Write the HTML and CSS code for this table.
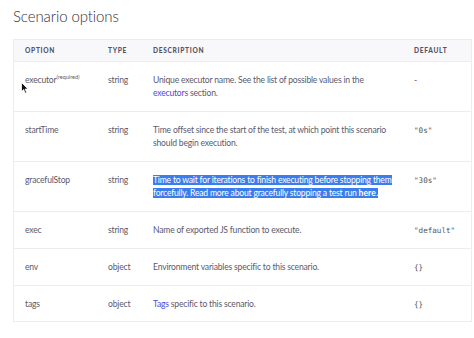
FILE: index.html
```html
<!DOCTYPE html>
<html lang="en">
<head>
    <meta charset="UTF-8">
    <meta name="viewport" content="width=device-width, initial-scale=1.0">
    <title>Scenario options</title>
    <link rel="stylesheet" href="styles.css">
</head>
<body>
    <div class="page">
        <h2 class="title">Scenario options</h2>

        <table class="options">
            <thead>
                <tr>
                    <th class="col-option">Option</th>
                    <th class="col-type">Type</th>
                    <th class="col-desc">Description</th>
                    <th class="col-default">Default</th>
                </tr>
            </thead>
            <tbody>
                <tr>
                    <td>executor<sup>(required)</sup></td>
                    <td>string</td>
                    <td>Unique executor name. See the list of possible values in the <a href="#">executors</a> section.</td>
                    <td>-</td>
                </tr>
                <tr>
                    <td>startTime</td>
                    <td>string</td>
                    <td>Time offset since the start of the test, at which point this scenario should begin execution.</td>
                    <td><code>"0s"</code></td>
                </tr>
                <tr>
                    <td>gracefulStop</td>
                    <td>string</td>
                    <td><span class="selected">Time to wait for iterations to finish executing before stopping them forcefully. Read more about gracefully stopping a test run <a class="strong" href="#">here</a>.</span></td>
                    <td><code>"30s"</code></td>
                </tr>
                <tr>
                    <td>exec</td>
                    <td>string</td>
                    <td>Name of exported JS function to execute.</td>
                    <td><code>"default"</code></td>
                </tr>
                <tr>
                    <td>env</td>
                    <td>object</td>
                    <td>Environment variables specific to this scenario.</td>
                    <td><code>{}</code></td>
                </tr>
                <tr>
                    <td>tags</td>
                    <td>object</td>
                    <td><a href="#">Tags</a> specific to this scenario.</td>
                    <td><code>{}</code></td>
                </tr>
            </tbody>
        </table>

        <svg class="cursor" width="8" height="12" viewBox="0 0 8 12">
            <path d="M0.5 0.5 L0.5 9.5 L2.6 7.6 L4.2 11.2 L5.6 10.6 L4.1 7.1 L7 7 Z" fill="#111" stroke="#fff" stroke-width="0.8"/>
        </svg>
    </div>
</body>
</html>
```

FILE: styles.css
```css
body {
    margin: 0;
    background-color: #fff;
    font-family: Lato, "Open Sans", sans-serif;
    color: #5a5a6e;
}
.page {
    position: relative;
    padding: 7px 4px 0 13px;
}
.title {
    margin: 0 0 13px 0;
    font-size: 15px;
    font-weight: 300;
    line-height: 19px;
    color: #2f2f3d;
    letter-spacing: -0.1px;
}
.options {
    width: 457px;
    border-collapse: collapse;
    border: 1px solid #ececf1;
    font-size: 8.6px;
    letter-spacing: -0.2px;
    table-layout: fixed;
}
.options th {
    background-color: #f8f8fb;
    text-align: left;
    font-size: 6.6px;
    font-weight: 900;
    letter-spacing: 0.7px;
    text-transform: uppercase;
    color: #555566;
    padding: 5px 11px;
    line-height: 11px;
    border-bottom: 1px solid #ececf1;
}
.options td {
    padding: 11.5px 11px;
    line-height: 13px;
    vertical-align: top;
    border-bottom: 1px solid #ececf1;
}
.options tr:last-child td {
    padding-bottom: 10px;
}
.col-option { width: 61px; }
.col-type { width: 23px; }
.col-desc { width: 239px; }
.col-default { width: 46px; }
sup {
    font-size: 5.5px;
    vertical-align: 4px;
    line-height: 0;
    letter-spacing: 0;
}
a {
    color: #5548d9;
    text-decoration: none;
}
.strong {
    font-weight: bold;
    letter-spacing: 0;
    padding-right: 0.5px;
}
code {
    font-family: "DejaVu Sans Mono", monospace;
    font-size: 7.6px;
    letter-spacing: 0;
    color: #555;
}
.selected {
    background-color: #3b7ded;
    color: #fff;
}
.selected a {
    color: #fff;
}
.cursor {
    position: absolute;
    left: 21px;
    top: 82px;
}
```
